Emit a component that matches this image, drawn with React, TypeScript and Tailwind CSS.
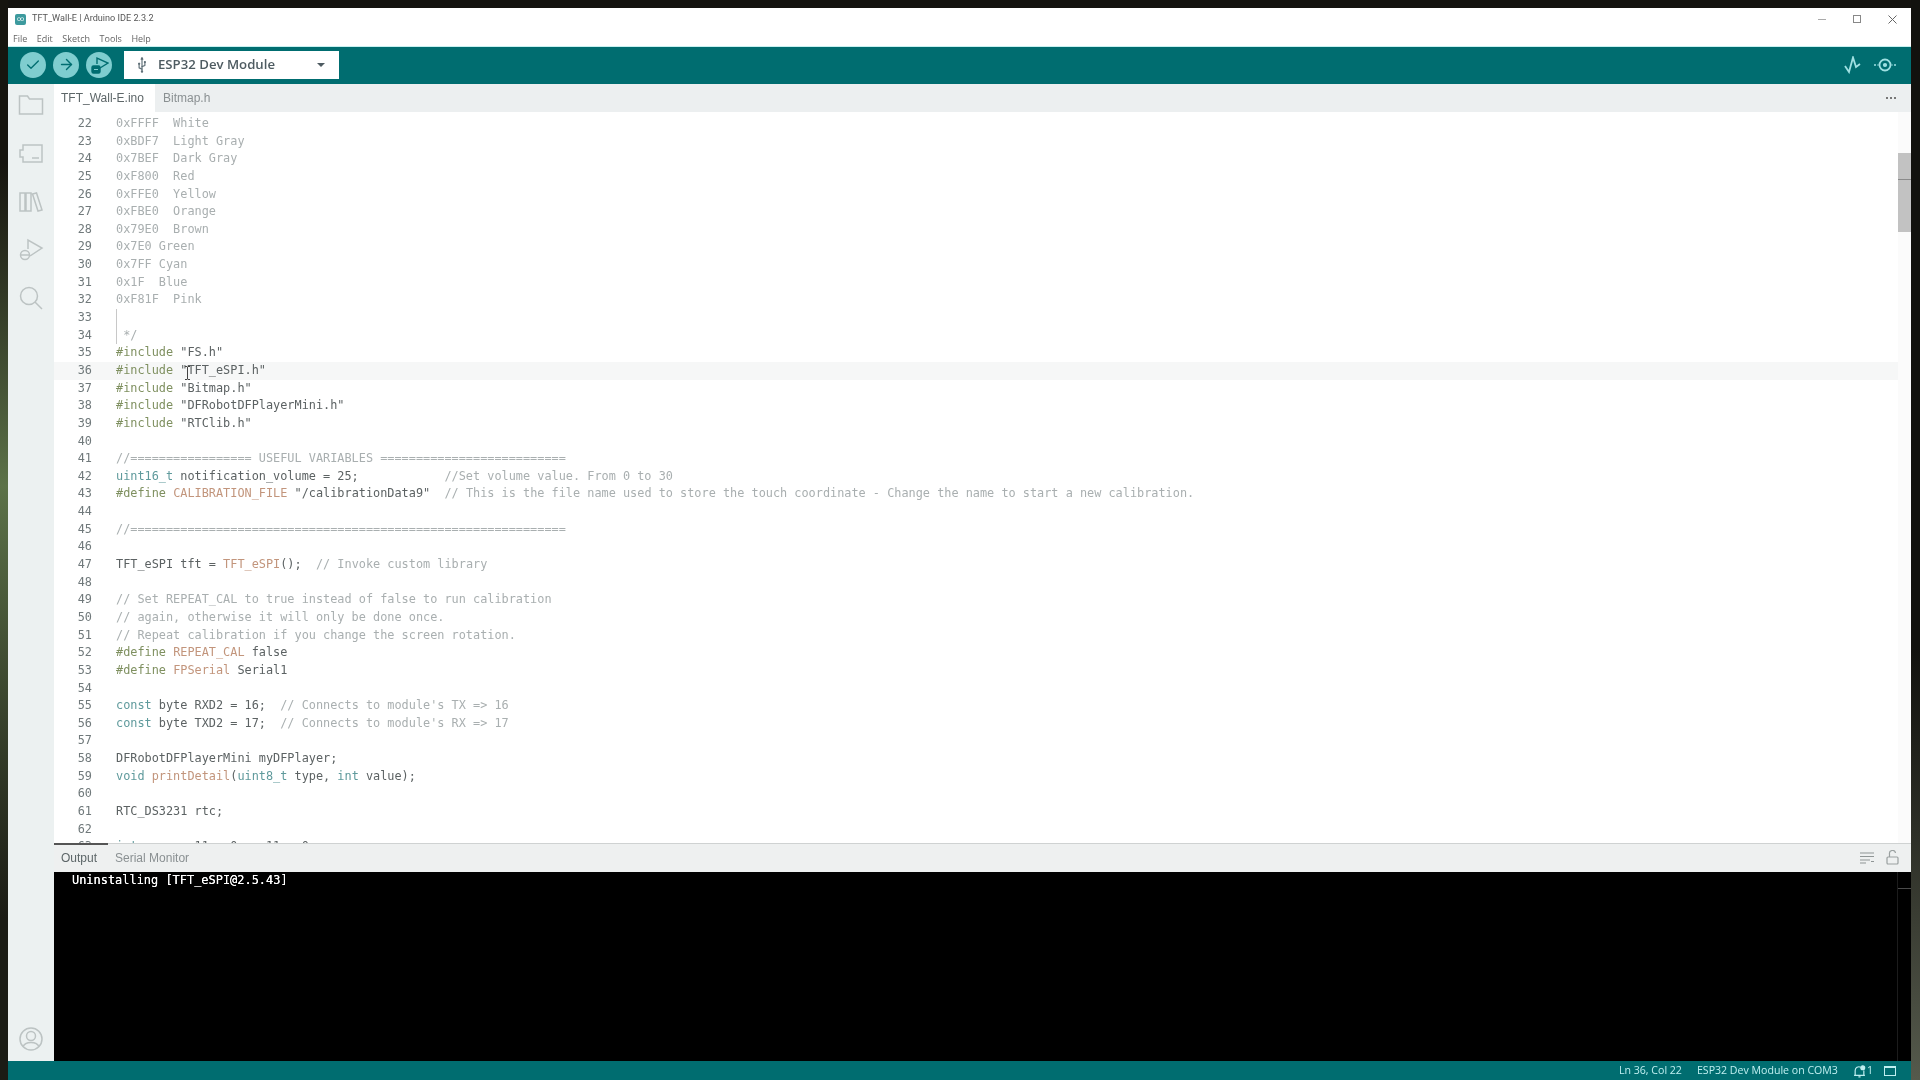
import React from 'react'
import { Check, ArrowRight, Usb } from 'lucide-react'

const C = 'text-[#a9afb0]'
const K = 'text-[#5f9a9c]'
const D = 'text-[#7f9060]'
const M = 'text-[#c2957c]'
const P = 'text-[#5c6263]'
const F = 'text-[#c2957c]'

type Token = [string, string]

const rows: Token[][] = [
	[[C, '0xFFFF  White']],
	[[C, '0xBDF7  Light Gray']],
	[[C, '0x7BEF  Dark Gray']],
	[[C, '0xF800  Red']],
	[[C, '0xFFE0  Yellow']],
	[[C, '0xFBE0  Orange']],
	[[C, '0x79E0  Brown']],
	[[C, '0x7E0 Green']],
	[[C, '0x7FF Cyan']],
	[[C, '0x1F  Blue']],
	[[C, '0xF81F  Pink']],
	[],
	[[C, ' */']],
	[[D, '#include '], [P, '"FS.h"']],
	[[D, '#include '], [P, '"TFT_eSPI.h"']],
	[[D, '#include '], [P, '"Bitmap.h"']],
	[[D, '#include '], [P, '"DFRobotDFPlayerMini.h"']],
	[[D, '#include '], [P, '"RTClib.h"']],
	[],
	[[C, '//================= USEFUL VARIABLES ==========================']],
	[[K, 'uint16_t'], [P, ' notification_volume = 25;            '], [C, '//Set volume value. From 0 to 30']],
	[[D, '#define '], [M, 'CALIBRATION_FILE'], [P, ' "/calibrationData9"  '], [C, '// This is the file name used to store the touch coordinate - Change the name to start a new calibration.']],
	[],
	[[C, '//=============================================================']],
	[],
	[[P, 'TFT_eSPI tft = '], [F, 'TFT_eSPI'], [P, '();  '], [C, '// Invoke custom library']],
	[],
	[[C, '// Set REPEAT_CAL to true instead of false to run calibration']],
	[[C, '// again, otherwise it will only be done once.']],
	[[C, '// Repeat calibration if you change the screen rotation.']],
	[[D, '#define '], [M, 'REPEAT_CAL'], [P, ' false']],
	[[D, '#define '], [M, 'FPSerial'], [P, ' Serial1']],
	[],
	[[K, 'const'], [P, ' byte RXD2 = 16;  '], [C, "// Connects to module's TX => 16"]],
	[[K, 'const'], [P, ' byte TXD2 = 17;  '], [C, "// Connects to module's RX => 17"]],
	[],
	[[P, 'DFRobotDFPlayerMini myDFPlayer;']],
	[[K, 'void'], [P, ' '], [F, 'printDetail'], [P, '('], [K, 'uint8_t'], [P, ' type, '], [K, 'int'], [P, ' value);']],
	[],
	[[P, 'RTC_DS3231 rtc;']],
	[],
	[[K, 'int'], [P, ' cursor_11 = 0, ux11 = 0;']],
]

const ToolButton: React.FC<{ children: React.ReactNode }> = ({ children }) => (
	<div className="flex h-[26px] w-[26px] items-center justify-center rounded-full bg-[#7fcdcf] text-[#006d70]">
		{children}
	</div>
)

const SideIcon: React.FC<{ children: React.ReactNode }> = ({ children }) => (
	<svg width="26" height="26" viewBox="0 0 26 26" fill="none" stroke="#bcc3c3" strokeWidth="1.5">
		{children}
	</svg>
)

export default function App() {
	return (
		<div className="flex h-screen w-full overflow-hidden bg-[#14140f] font-['Liberation_Sans',sans-serif]">
			<div className="h-full w-2 bg-linear-to-b from-[#16150f] from-15% via-[#5c7248] via-45% to-[#1b1c15] to-85%" />
			<div className="flex min-w-0 flex-1 flex-col">
				<div className="h-2 bg-[#14130f]" />
				<div className="flex min-h-0 flex-1 flex-col bg-white blur-[0.4px]">
					{/* title */}
					<div className="flex h-[22px] items-center pl-[7px] font-['Roboto',sans-serif] text-[9.1px] text-[#555]">
						<div className="mr-[6px] flex h-[11px] w-[11px] items-center justify-center rounded-[2px] bg-[#3d9a9e] text-[7px] leading-none text-white">
							∞
						</div>
						<span className="flex-1">TFT_Wall-E | Arduino IDE 2.3.2</span>
						<div className="flex h-full items-center text-[#777]">
							<div className="mr-[27px] h-px w-[8px] bg-[#aaa]" />
							<div className="mr-[27px] h-[8px] w-[8px] border border-[#888]" />
							<svg className="mr-[14px]" width="9" height="9" viewBox="0 0 9 9" stroke="#666" strokeWidth="1">
								<path d="M0.5 0.5 8.5 8.5M8.5 0.5 0.5 8.5" />
							</svg>
						</div>
					</div>
					<div className="flex h-[16px] items-center gap-[9.5px] pl-[5px] pt-[1px] font-['Open_Sans',sans-serif] text-[9px] text-[#666]">
						<span>File</span>
						<span>Edit</span>
						<span>Sketch</span>
						<span>Tools</span>
						<span>Help</span>
					</div>
					{/* toolbar */}
					<div className="flex h-[38px] items-center border-t border-[#c8f0f0] bg-[#006d70] pb-[2px] pl-[12px] pr-[14px]">
						<div className="flex items-center gap-[7px]">
							<ToolButton>
								<Check size={16} strokeWidth={2} />
							</ToolButton>
							<ToolButton>
								<ArrowRight size={17} strokeWidth={2} />
							</ToolButton>
							<ToolButton>
								<svg width="20" height="20" viewBox="0 0 20 20" fill="none" stroke="#006d70" strokeWidth="1.4">
									<path d="M8 9V3l11 5-8 5" />
									<rect x="3" y="11" width="8" height="7" fill="#006d70" rx="1.5" />
									<path d="M5 14.5h4" stroke="#7fcdcf" strokeWidth="1" />
								</svg>
							</ToolButton>
						</div>
						<div className="ml-[12px] flex h-[28px] w-[215px] items-center bg-white pl-[11px] pr-[14px] pt-[1px] font-['Open_Sans',sans-serif] text-[13.2px] font-semibold text-[#4e5b61]">
							<Usb size={14} className="mr-[9px] rotate-[-45deg] text-[#607078]" />
							<span className="flex-1">ESP32 Dev Module</span>
							<div className="h-0 w-0 border-x-[4px] border-t-[4px] border-x-transparent border-t-[#4e5b61]" />
						</div>
						<div className="flex-1" />
						<svg className="mr-[11px]" width="18" height="18" viewBox="0 0 18 18" fill="none" stroke="#9fe0e2" strokeWidth="1.8">
							<path d="M1 10l4 6L9 1.5l3 9.5 4-3" />
						</svg>
						<svg width="24" height="18" viewBox="0 0 24 18" fill="none" stroke="#9fe0e2" strokeWidth="1.8">
							<circle cx="12" cy="9" r="5.5" />
							<circle cx="12" cy="9" r="1.2" fill="#9fe0e2" />
							<path d="M1 9h2M4.5 9h1M18.5 9h1M21 9h2" strokeWidth="1.4" />
						</svg>
					</div>
					<div className="flex min-h-0 flex-1">
						{/* sidebar */}
						<div className="flex w-[46px] shrink-0 flex-col items-center bg-[#ecf1f1] pt-[8px]">
							<div className="flex flex-col items-center gap-[22px]">
								<SideIcon>
									<path d="M1.5 4h8l2 3h13v15h-23z" />
								</SideIcon>
								<div className="mt-[1px]">
									<SideIcon>
										<path d="M5 4h19v17H5v-5H2v-7h3zM14 17h7" />
									</SideIcon>
								</div>
								<SideIcon>
									<path d="M2 4h5v18H2zM8 4h5v18H8zM14.5 5l4-1 5.5 17-4 1z" />
								</SideIcon>
								<SideIcon>
									<path d="M10 12V3l14 8-12 8" />
									<circle cx="7" cy="18" r="4.5" />
									<path d="M2.5 18h9" />
								</SideIcon>
								<SideIcon>
									<circle cx="11" cy="11" r="8.5" />
									<path d="M17 17l7 7" />
								</SideIcon>
							</div>
							<div className="flex-1" />
							<div className="mb-[9px]">
								<SideIcon>
									<circle cx="13" cy="13" r="11" />
									<circle cx="13" cy="10" r="4.5" />
									<path d="M5 21c2-6 14-6 16 0" />
								</SideIcon>
							</div>
						</div>
						<div className="flex min-w-0 flex-1 flex-col">
							{/* tabs */}
							<div className="flex h-[28px] items-center bg-[#eceff0] text-[12px] text-[#5d6668]">
								<div className="flex h-full w-[101px] items-center bg-white pl-[7px]">TFT_Wall-E.ino</div>
								<div className="pl-[8px] text-[#8a9092]">Bitmap.h</div>
								<div className="flex-1" />
								<div className="mr-[15px] flex gap-[2px]">
									<div className="h-[2px] w-[2px] bg-[#777]" />
									<div className="h-[2px] w-[2px] bg-[#777]" />
									<div className="h-[2px] w-[2px] bg-[#777]" />
								</div>
							</div>
							{/* editor */}
							<div className="relative flex h-[731px] overflow-hidden">
								<div className="min-w-0 flex-1 pt-[3px] font-['DejaVu_Sans_Mono',monospace] text-[11.87px]">
									{rows.map((row, i) => {
										const n = i + 22
										return (
											<div key={n} className={`flex h-[17.65px] items-center leading-[17.65px] ${n === 36 ? 'bg-[#f6f7f7]' : ''}`}>
												<div className="w-[38px] shrink-0 text-right text-[#70797b]">{n}</div>
												<div className={`ml-[24px] h-full whitespace-pre ${n === 33 || n === 34 ? 'shadow-[inset_1px_0_0_#c8c8c8]' : ''}`}>
													{row.map(([cls, text], j) => (
														<span key={j} className={cls}>
															{text}
														</span>
													))}
													{row.length === 0 ? ' ' : null}
												</div>
											</div>
										)
									})}
								</div>
								<div className="w-[13px] shrink-0 bg-[#fbfbfb] pt-[41px]">
									<div className="h-[27px] border-b border-[#8a8a8a] bg-[#c2c2c2]" />
									<div className="h-[52px] bg-[#c2c2c2]" />
								</div>
								{/* mouse cursor */}
								<svg className="absolute left-[130px] top-[254px]" width="7" height="14" viewBox="0 0 7 14" fill="none" stroke="#444" strokeWidth="1">
									<path d="M1 .5h2l.5.5.5-.5h2M3.5 1v12M1 13.5h2l.5-.5.5.5h2" />
								</svg>
							</div>
							{/* panel header */}
							<div className="relative flex h-[29px] shrink-0 items-center border-t border-[#cfd2d2] bg-[#eef0f0] text-[12px]">
								<div className="absolute -top-px left-0 h-[2px] w-[54px] bg-[#555]" />
								<span className="ml-[7px] text-[#5d6668]">Output</span>
								<span className="ml-[18px] text-[#8a9092]">Serial Monitor</span>
								<div className="flex-1" />
								<svg className="mr-[11px]" width="15" height="12" viewBox="0 0 15 12" stroke="#8f9595" strokeWidth="1" fill="none">
									<path d="M0 1h14M0 4.5h14M0 8h10M0 11h6M11 9.5h3" />
								</svg>
								<svg className="mb-[1px] mr-[12px]" width="13" height="15" viewBox="0 0 13 15" stroke="#9aa0a0" strokeWidth="1.2" fill="none">
									<rect x="1" y="7" width="11" height="7" rx="1" />
									<path d="M3.5 7V4a3 3 0 0 1 6-1" />
								</svg>
							</div>
							{/* output */}
							<div className="flex h-[189px] shrink-0 bg-black font-['DejaVu_Sans_Mono',monospace] text-[11.95px] text-white">
								<div className="flex-1 pl-[18px] [text-shadow:0_0_0.6px_white]">Uninstalling [TFT_eSPI@2.5.43]</div>
								<div className="w-[14px] border-l border-[#1c1c1c] pt-[16px]">
									<div className="h-px bg-[#4a4a4a]" />
								</div>
							</div>
						</div>
					</div>
					{/* status bar */}
					<div className="flex h-[19px] shrink-0 items-center justify-end bg-[#006d70] pr-[15px] pt-[1px] font-['Open_Sans',sans-serif] text-[10.6px] text-[#bfeff0]">
						<span className="mr-[15px]">Ln 36, Col 22</span>
						<span className="mr-[15px]">ESP32 Dev Module on COM3</span>
						<svg className="mr-[1px]" width="13" height="13" viewBox="0 0 12 12" fill="none" stroke="#bfeff0" strokeWidth="1.1">
							<path d="M2 9V5a3.5 3.5 0 0 1 5-3M10 5v4M1 9.5h10M5 11h2" />
							<circle cx="9" cy="2.5" r="1.8" fill="#bfeff0" />
						</svg>
						<span className="mr-[11px]">1</span>
						<div className="h-[10px] w-[12px] border border-t-2 border-[#bfeff0]" />
					</div>
				</div>
			</div>
			<div className="h-full w-[9px] bg-linear-to-b from-[#12120e] from-60% to-[#555a4c]" />
		</div>
	)
}
